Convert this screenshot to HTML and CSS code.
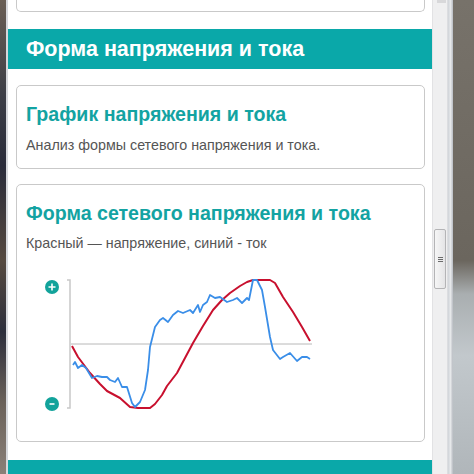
FILE: index.html
```html
<!DOCTYPE html>
<html lang="ru">
<head>
<meta charset="utf-8">
<title>Форма напряжения и тока</title>
<link rel="stylesheet" href="styles.css">
</head>
<body>
<div class="screen">
  <div class="desk-left"></div>
  <div class="frame-left"></div>
  <main class="page">
    <div class="card stub"></div>
    <h2 class="section-bar">Форма напряжения и тока</h2>
    <section class="card">
      <h3 class="card-title">График напряжения и тока</h3>
      <p class="card-text">Анализ формы сетевого напряжения и тока.</p>
    </section>
    <section class="card chart-card">
      <h3 class="card-title">Форма сетевого напряжения и тока</h3>
      <p class="card-text tight">Красный — напряжение, синий - ток</p>
      <svg class="chart" width="290" height="150" viewBox="38 272 290 150">
        <polyline class="axis" points="67,280 70,280 70,408 67,408"/>
        <line class="zero" x1="71" y1="344" x2="312" y2="344"/>
        <circle class="btn" cx="52" cy="287" r="7"/>
        <path class="btn-ico" d="M48.5 287h7M52 283.5v7"/>
        <circle class="btn" cx="52" cy="404" r="7"/>
        <path class="btn-ico" d="M49.5 404h5"/>
        <polyline class="volt" points="72,346 78,357 90,373 100,384 107,391 120,398 130,407 138,408 150,408 155,404 162,395 167,386 177,373 185,358 193,343 203,326 213,310 222,300 230,293 240,286 247,282 253,280 270,280 275,283 283,297 293,312 302,327 310,341"/>
        <polyline class="curr" points="73,365 75,362 78,368 82,365 86,368 92,378 97,376 102,377 107,377 110,380 115,382 118,378 122,387 127,387 132,403 135,407 140,402 145,390 148,370 150,347 155,327 160,320 163,318 168,322 173,315 178,311 183,313 190,310 193,313 198,305 200,312 203,305 207,302 210,295 215,298 220,297 227,302 233,300 237,298 242,303 247,298 249,300 253,280 257,280 262,290 265,307 270,337 273,350 280,359 283,357 290,353 297,361 302,357 307,357 310,359"/>
      </svg>
    </section>
    <div class="section-bar next"></div>
  </main>
  <div class="scrollbar">
    <div class="scroll-cap"></div>
    <div class="thumb"><span class="grip"></span><span class="grip"></span><span class="grip"></span></div>
  </div>
  <div class="frame-right"></div>
  <div class="desk-right"></div>
</div>
</body>
</html>
```
FILE: styles.css
```css
html, body {
  margin: 0;
  padding: 0;
  height: 474px;
  overflow: hidden;
  background: #5a5650;
}
.screen {
  display: flex;
  width: 474px;
  height: 474px;
  font-family: "Liberation Sans", Arial, sans-serif;
}
.desk-left {
  width: 6px;
  background: linear-gradient(#6a5f55 0%, #3d3f47 20%, #2a2c3a 35%, #564a40 55%, #2d2f3c 70%, #6b625a 85%, #8a8078 100%);
}
.frame-left {
  width: 2px;
  background: #d6d8dc;
}
.page {
  width: 424px;
  height: 474px;
  overflow: hidden;
  background: #ffffff;
  padding: 0 7px 0 8px;
  box-sizing: border-box;
}
.card {
  border: 1px solid #c9c9c9;
  border-radius: 5px;
  padding: 16px 9px 14px;
  margin: 0;
  background: #fff;
}
.card.stub {
  height: 11px;
  padding: 0;
  border-top: 0;
  border-radius: 0 0 5px 5px;
  margin-bottom: 17px;
}
.section-bar {
  margin: 0 -7px 16px -8px;
  height: 40px;
  line-height: 40px;
  padding-left: 18px;
  background: #0aa8a9;
  color: #fff;
  font-size: 21.5px;
  font-weight: bold;
}
.section-bar.next {
  margin-top: 18px;
}
.card-title {
  margin: 0;
  font-size: 19.6px;
  line-height: 24px;
  font-weight: bold;
  color: #13a3a2;
}
.card-text {
  margin: 10px 0 0;
  font-size: 14.3px;
  line-height: 18px;
  color: #555;
}
.card-text.tight {
  margin-top: 9px;
}
.chart-card {
  margin-top: 15px;
  padding-bottom: 19px;
}
.chart {
  display: block;
  margin: 20px 0 0 12px;
}
.axis {
  fill: none;
  stroke: #c8c8c8;
  stroke-width: 1.5;
}
.zero {
  stroke: #b8b8b8;
  stroke-width: 1;
}
.btn {
  fill: #12a39b;
}
.btn-ico {
  stroke: #fff;
  stroke-width: 1.6;
  fill: none;
}
.volt {
  fill: none;
  stroke: #c8102e;
  stroke-width: 2;
  stroke-linejoin: round;
}
.curr {
  fill: none;
  stroke: #3a8ee8;
  stroke-width: 1.8;
  stroke-linejoin: round;
}
.scrollbar {
  width: 16px;
  box-sizing: border-box;
  background: #efeff0;
  border-left: 1px solid #e2e2e4;
  border-right: 1px solid #dcdde0;
}
.scroll-cap {
  height: 3px;
  margin: 0 1px 0 4px;
  background: #d8d8da;
}
.thumb {
  margin: 226px 0 0 1px;
  width: 12px;
  height: 60px;
  box-sizing: border-box;
  border: 1px solid #b4b4b6;
  border-radius: 2px;
  background: linear-gradient(90deg, #f6f6f6, #e4e4e6);
  display: flex;
  flex-direction: column;
  align-items: center;
  justify-content: center;
  gap: 1px;
}
.grip {
  display: block;
  width: 5px;
  height: 1px;
  background: #6a6a6a;
}
.frame-right {
  width: 5px;
  background: linear-gradient(90deg, #cfd3d8, #e6e8ea 50%, #b8bcc2);
}
.desk-right {
  width: 21px;
  background: linear-gradient(#77726a 0%, #6b665e 55%, #a9aeb0 62%, #c2c8cc 75%, #b0b6ba 100%);
}
```
